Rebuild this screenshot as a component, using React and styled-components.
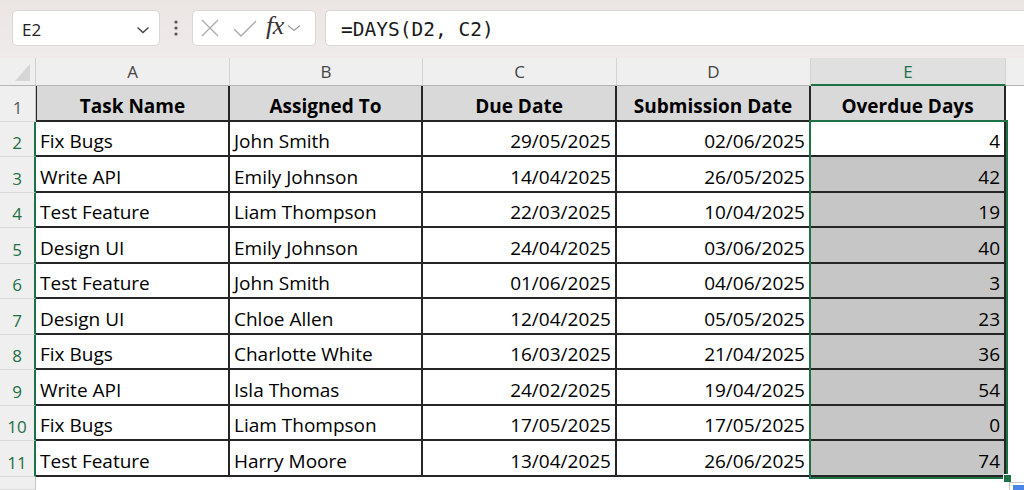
import React from 'react';
import styled, { createGlobalStyle } from 'styled-components';

const Global = createGlobalStyle`
  html, body { margin: 0; padding: 0; background: #ffffff; }
  body { width: 1024px; height: 490px; overflow: hidden; font-family: "Open Sans", "Noto Sans", sans-serif; }
`;

const Frame = styled.div`
  width: 1024px;
  height: 490px;
  display: flex;
  flex-direction: column;
  overflow: hidden;
`;

const FormulaBar = styled.div`
  flex: none;
  height: 58px;
  box-sizing: border-box;
  padding: 10px 0 0 12px;
  display: flex;
  align-items: flex-start;
  background: linear-gradient(180deg, #ebe6e4 0%, #efebea 100%);
`;

const Box = styled.div`
  box-sizing: border-box;
  height: 36px;
  background: #ffffff;
  border: 1px solid #dad7d6;
  border-radius: ${p => (p.$open ? '5px 0 0 5px' : '5px')};
  border-right: ${p => (p.$open ? 'none' : '1px solid #dad7d6')};
  display: flex;
  align-items: center;
  width: ${p => p.$w};
  flex: ${p => (p.$grow ? '1' : 'none')};
  margin-left: ${p => p.$ml || '0'};
`;

const NameText = styled.span`
  flex: 1;
  padding-left: 9px;
  padding-top: 2px;
  font-family: "Open Sans", sans-serif;
  font-size: 17px;
  color: #222;
`;

const Dots = styled.div`
  width: 32px;
  height: 36px;
  display: flex;
  align-items: center;
  justify-content: center;
`;

const FxText = styled.span`
  font-family: "Liberation Serif", "DejaVu Serif", serif;
  font-style: italic;
  font-size: 26px;
  color: #333;
  margin: -4px 3px 0 9px;
  letter-spacing: -0.5px;
`;

const FormulaText = styled.span`
  padding-left: 15px;
  padding-top: 2px;
  font-family: "DejaVu Sans Mono", "Liberation Mono", monospace;
  font-size: 19.5px;
  color: #1a1a1a;
`;

const Sheet = styled.div`
  flex: 1;
  position: relative;
  display: grid;
  grid-template-columns: 36px 194px 193px 194px 194px 195px 1fr;
  grid-template-rows: 28px 36px 35px 36px 35px 36px 35px 36px 35px 36px 35px 36px 1fr;
  background: #ffffff;
`;

const Corner = styled.div`
  grid-area: 1 / 1;
  background: #efefef;
  border-right: 1px solid #cfcfcf;
  border-bottom: 1px solid #b5b5b5;
  display: flex;
  align-items: flex-end;
  justify-content: flex-end;
  padding: 0 5px 4px 0;
`;

const ColHead = styled.div`
  grid-area: 1 / ${p => p.$c};
  box-sizing: border-box;
  background: ${p => (p.$active ? '#e0e0e0' : '#efefef')};
  border-right: 1px solid #d3d3d3;
  border-bottom: ${p => (p.$active ? '2px solid #1e7145' : '1px solid #b5b5b5')};
  display: flex;
  align-items: center;
  justify-content: center;
  font-family: "Open Sans", sans-serif;
  font-size: 17px;
  color: ${p => (p.$active ? '#1e7145' : '#444')};
`;

const RowHead = styled.div`
  grid-area: ${p => p.$r} / 1;
  box-sizing: border-box;
  background: #efefef;
  border-bottom: 1px solid #d9d9d9;
  border-right: ${p => (p.$active ? '2px solid #1e7145' : '1px solid #c5c5c5')};
  display: flex;
  align-items: flex-end;
  justify-content: center;
  padding-bottom: 2px;
  font-family: "Open Sans", sans-serif;
  font-size: 17px;
  color: ${p => (p.$active ? '#1e7145' : '#5b5b5b')};
`;

const Cell = styled.div`
  grid-area: ${p => p.$r} / ${p => p.$c};
  box-sizing: border-box;
  display: flex;
  align-items: flex-end;
  justify-content: ${p => (p.$align === 'right' ? 'flex-end' : p.$align === 'center' ? 'center' : 'flex-start')};
  padding: 0 ${p => (p.$align === 'right' ? '4px' : '0')} 1px ${p => (p.$align === 'left' ? '4px' : '0')};
  border-right: 2px solid #262626;
  border-bottom: 2px solid #262626;
  border-left: ${p => (p.$edge ? '1px solid #262626' : 'none')};
  background: ${p => p.$bg || '#ffffff'};
  font-family: "Open Sans", sans-serif;
  font-size: 19px;
  font-weight: ${p => (p.$bold ? 700 : 400)};
  color: #000;
  white-space: nowrap;
  overflow: hidden;
`;

const BlankHead = styled.div`
  grid-area: 1 / 7;
  background: #efefef;
  border-bottom: 1px solid #b5b5b5;
`;

const Selection = styled.div`
  grid-column: 6;
  grid-row: 3 / 13;
  margin: -2px -2px -2px -2px;
  border: 2px solid #1e7145;
  position: relative;
  z-index: 2;
  pointer-events: none;
`;

const Handle = styled.div`
  position: absolute;
  right: -6px;
  bottom: -6px;
  width: 7px;
  height: 7px;
  background: #1e7145;
  border: 1px solid #ffffff;
`;

const QuickBox = styled.div`
  position: absolute;
  right: 0;
  bottom: 0;
  width: 15px;
  height: 8px;
  box-sizing: border-box;
  border: 1px solid #c8c8c8;
  border-right: none;
  border-bottom: none;
  background: #fff;
  padding: 2px 0 0 3px;
  z-index: 3;
`;

const QuickFill = styled.div`
  width: 12px;
  height: 6px;
  background: #4a86e8;
`;

const rows = [
  ['Fix Bugs', 'John Smith', '29/05/2025', '02/06/2025', 4],
  ['Write API', 'Emily Johnson', '14/04/2025', '26/05/2025', 42],
  ['Test Feature', 'Liam Thompson', '22/03/2025', '10/04/2025', 19],
  ['Design UI', 'Emily Johnson', '24/04/2025', '03/06/2025', 40],
  ['Test Feature', 'John Smith', '01/06/2025', '04/06/2025', 3],
  ['Design UI', 'Chloe Allen', '12/04/2025', '05/05/2025', 23],
  ['Fix Bugs', 'Charlotte White', '16/03/2025', '21/04/2025', 36],
  ['Write API', 'Isla Thomas', '24/02/2025', '19/04/2025', 54],
  ['Fix Bugs', 'Liam Thompson', '17/05/2025', '17/05/2025', 0],
  ['Test Feature', 'Harry Moore', '13/04/2025', '26/06/2025', 74],
];

const headers = ['Task Name', 'Assigned To', 'Due Date', 'Submission Date', 'Overdue Days'];
const letters = ['A', 'B', 'C', 'D', 'E'];

export default function App() {
  return (
    <Frame>
      <Global />
      <FormulaBar>
        <Box $w="148px">
          <NameText>E2</NameText>
          <svg width="14" height="8" viewBox="0 0 14 8" style={{ marginRight: 9, marginTop: 3 }}>
            <path d="M1.5 1.5 L7 6.5 L12.5 1.5" fill="none" stroke="#444" strokeWidth="1.4" />
          </svg>
        </Box>
        <Dots>
          <svg width="4" height="16" viewBox="0 0 4 16">
            <circle cx="2" cy="2" r="1.6" fill="#555" />
            <circle cx="2" cy="8" r="1.6" fill="#555" />
            <circle cx="2" cy="14" r="1.6" fill="#555" />
          </svg>
        </Dots>
        <Box $w="124px">
          <svg width="18" height="18" viewBox="0 0 18 18" style={{ marginLeft: 8 }}>
            <path d="M1 1 L17 17 M17 1 L1 17" stroke="#ababab" strokeWidth="1.3" fill="none" />
          </svg>
          <svg width="24" height="17" viewBox="0 0 24 17" style={{ marginLeft: 14 }}>
            <path d="M1 9 L8 16 L23 1" stroke="#ababab" strokeWidth="1.3" fill="none" />
          </svg>
          <FxText>fx</FxText>
          <svg width="14" height="8" viewBox="0 0 14 8">
            <path d="M1 1.5 L7 6.5 L13 1.5" fill="none" stroke="#9c9c9c" strokeWidth="1.2" />
          </svg>
        </Box>
        <Box $grow $open $ml="9px">
          <FormulaText>=DAYS(D2, C2)</FormulaText>
        </Box>
      </FormulaBar>
      <Sheet>
        <Corner>
          <svg width="15" height="17" viewBox="0 0 15 17">
            <polygon points="15,0 15,17 0,17" fill="#d6d6d6" />
          </svg>
        </Corner>
        {letters.map((l, i) => (
          <ColHead key={l} $c={i + 2} $active={l === 'E'}>{l}</ColHead>
        ))}
        <BlankHead />

        <RowHead $r={2}>1</RowHead>
        {headers.map((h, i) => (
          <Cell key={h} $r={2} $c={i + 2} $bold $align="center" $bg="#d9d9d9" $edge={i === 0}>{h}</Cell>
        ))}

        {rows.map((r, ri) => (
          <React.Fragment key={ri}>
            <RowHead $r={ri + 3} $active>{ri + 2}</RowHead>
            <Cell $r={ri + 3} $c={2} $align="left">{r[0]}</Cell>
            <Cell $r={ri + 3} $c={3} $align="left">{r[1]}</Cell>
            <Cell $r={ri + 3} $c={4} $align="right">{r[2]}</Cell>
            <Cell $r={ri + 3} $c={5} $align="right">{r[3]}</Cell>
            <Cell $r={ri + 3} $c={6} $align="right" $bg={ri === 0 ? '#ffffff' : '#c6c6c6'}>{r[4]}</Cell>
          </React.Fragment>
        ))}

        <RowHead $r={13} />

        <Selection>
          <Handle />
        </Selection>
        <QuickBox>
          <QuickFill />
        </QuickBox>
      </Sheet>
    </Frame>
  );
}
